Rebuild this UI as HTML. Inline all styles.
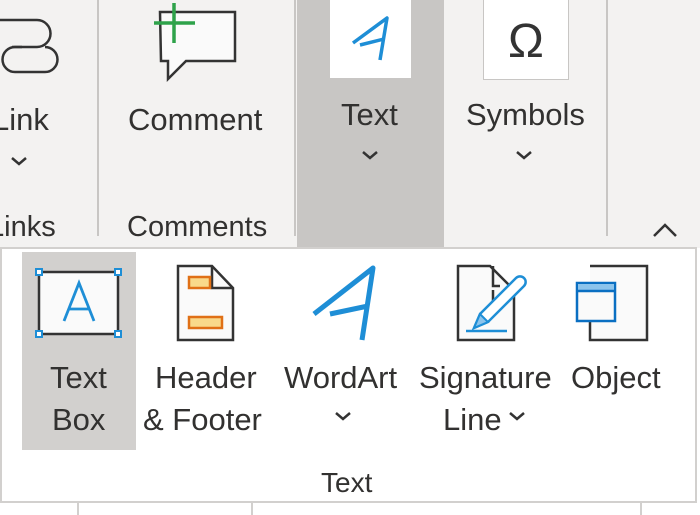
<!DOCTYPE html>
<html><head><style>
html,body{margin:0;width:700px;height:515px;overflow:hidden}
body{background:#fff;font-family:"Liberation Sans",sans-serif;color:#333;position:relative}
.a{position:absolute}
.t{position:absolute;font-size:31px;line-height:34px;white-space:nowrap;color:#323130}
</style></head><body>
<div class="a" style="left:0;top:0;width:700px;height:248px;background:#f3f2f1"></div>
<div class="a" style="left:97px;top:0;width:2px;height:236px;background:#c8c6c4"></div>
<div class="a" style="left:294px;top:0;width:2px;height:236px;background:#c8c6c4"></div>
<div class="a" style="left:606px;top:0;width:2px;height:236px;background:#c8c6c4"></div>
<div class="a" style="left:297px;top:0;width:147px;height:248px;background:#c8c6c4"></div>
<div class="a" style="left:330px;top:0;width:81px;height:78px;background:#fff"></div>
<div class="a" style="left:483px;top:0;width:84px;height:79px;background:#fff;border:1px solid #c8c6c4;border-top:0"></div>
<svg class="a" style="left:0;top:0" width="700" height="250">
<path d="M0,20 H37 a13.5,13.5 0 0 1 0,27 H12" fill="none" stroke="#333" stroke-width="2.5"/>
<path d="M45,47 a12.5,12.5 0 0 1 0,25 H15 a12.5,12.5 0 0 1 0,-25 H22" fill="none" stroke="#333" stroke-width="2.5"/>
<path d="M160,12 H235 V61 H186 L168,79 V61 H161 Z" fill="#fafafa" stroke="#333" stroke-width="2.5"/>
<path d="M174,3 V43 M154,23 H195" stroke="#2ea24a" stroke-width="3.5"/>
<path d="M353,43 L387,18 L380,60 M360,45 L384,39" fill="none" stroke="#1e8ed6" stroke-width="3.5" stroke-linejoin="round"/>
<text x="526" y="57" font-size="48" text-anchor="middle" fill="#333" font-family="Liberation Sans">Ω</text>
<path d="M12,158 l7,6 l7,-6 M363,152 l7,6 l7,-6 M517,152 l7,6 l7,-6" fill="none" stroke="#333" stroke-width="2.5"/>
<path d="M654,236 l11,-11 l11,11" fill="none" stroke="#333" stroke-width="2.5"/>
</svg>
<div class="t" style="left:-8px;top:103px">Link</div>
<div class="t" style="left:128px;top:103px">Comment</div>
<div class="t" style="left:341px;top:98px">Text</div>
<div class="t" style="left:466px;top:98px">Symbols</div>
<div class="t" style="left:-12px;top:210px;font-size:29px">Links</div>
<div class="t" style="left:127px;top:210px;font-size:29px">Comments</div>

<div class="a" style="left:0;top:247px;width:697px;height:256px;border:2px solid #d2d0ce;box-sizing:border-box;background:#fff"></div>
<div class="a" style="left:0;top:503px;width:700px;height:12px;background:#fff"></div>
<div class="a" style="left:77px;top:503px;width:2px;height:12px;background:#d2d0ce"></div>
<div class="a" style="left:251px;top:503px;width:2px;height:12px;background:#d2d0ce"></div>
<div class="a" style="left:640px;top:503px;width:2px;height:12px;background:#d2d0ce"></div>
<div class="a" style="left:22px;top:252px;width:114px;height:198px;background:#d2d0ce"></div>
<svg class="a" style="left:0;top:250px" width="700" height="100">
<rect x="39" y="22" width="79" height="62" fill="#fafafa" stroke="#333" stroke-width="2.5"/>
<g fill="#fff" stroke="#1e8ed6" stroke-width="2"><rect x="36" y="19" width="6" height="6"/><rect x="115" y="19" width="6" height="6"/><rect x="36" y="81" width="6" height="6"/><rect x="115" y="81" width="6" height="6"/></g>
<path d="M64,71 L79,33 L94,71 M69,59 H89" fill="none" stroke="#1e8ed6" stroke-width="2.8"/>
<path d="M178,16 H212 L233,38 V90 H178 Z" fill="#fafafa" stroke="#333" stroke-width="2.5"/>
<path d="M212,16 V38 H233" fill="none" stroke="#333" stroke-width="2.5"/>
<rect x="189" y="27" width="21" height="11" fill="#f9d98a" stroke="#e07016" stroke-width="2.5"/>
<rect x="189" y="67" width="33" height="11" fill="#f9d98a" stroke="#e07016" stroke-width="2.5"/>
<path d="M314,64 L373,18 L362,90 M330,64 L368,56" fill="none" stroke="#1e8ed6" stroke-width="5" stroke-linejoin="round"/>
<path d="M458,16 H490 L514,40 V90 H458 Z" fill="#fafafa" stroke="#333" stroke-width="2.5"/>
<path d="M493,40 V60" stroke="#333" stroke-width="2.5"/>
<path d="M493,16 V36 H500" fill="none" stroke="#333" stroke-width="2.5"/>
<path d="M474,78 L480,64 L516,28 a5,5 0 0 1 8,8 L488,72 Z" fill="#fff" stroke="#1e8ed6" stroke-width="2.5"/>
<path d="M474,78 L480,64 L488,72 Z" fill="#8cc4ec" stroke="#1e8ed6" stroke-width="2"/>
<path d="M466,81 H507" stroke="#1e8ed6" stroke-width="2.5"/>
<path d="M590,16 H647 V90 H590 V72" fill="#fafafa" stroke="#333" stroke-width="2.5"/>
<rect x="577" y="33" width="38" height="38" fill="#fafafa" stroke="#0a6fc2" stroke-width="2.5"/>
<rect x="578" y="34" width="36" height="7" fill="#8cc4ec"/>
<path d="M577,41 H615" stroke="#0a6fc2" stroke-width="2.5"/>
</svg>
<svg class="a" style="left:0;top:400px" width="700" height="40">
<path d="M336,13 l7,6 l7,-6 M510,13 l7,6 l7,-6" fill="none" stroke="#333" stroke-width="2.5"/>
</svg>
<div class="t" style="left:50px;top:361px">Text</div>
<div class="t" style="left:52px;top:403px">Box</div>
<div class="t" style="left:155px;top:361px">Header</div>
<div class="t" style="left:143px;top:403px">&amp; Footer</div>
<div class="t" style="left:284px;top:361px">WordArt</div>
<div class="t" style="left:419px;top:361px">Signature</div>
<div class="t" style="left:443px;top:403px">Line</div>
<div class="t" style="left:571px;top:361px">Object</div>
<div class="t" style="left:321px;top:468px;font-size:28px;line-height:30px">Text</div>
</body></html>
